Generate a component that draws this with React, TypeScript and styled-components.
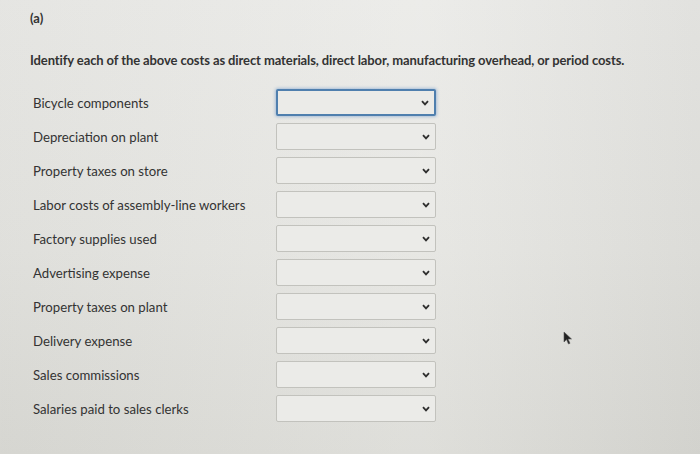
import React from "react";
import styled, { createGlobalStyle } from "styled-components";

const Global = createGlobalStyle`
  html, body { margin: 0; padding: 0; }
  body {
    width: 700px; height: 454px; overflow: hidden;
    font-family: Lato, "Open Sans", sans-serif;
    background: linear-gradient(180deg, #e9e9e6 0%, #e3e3df 55%, #d9d9d4 100%);
  }
`;

const Page = styled.div`
  position: relative;
  width: 700px;
  height: 454px;
  box-sizing: border-box;
  padding: 9px 0 0 30px;
  color: #333;
  background: linear-gradient(90deg, rgba(0,0,0,0.015) 0%, rgba(255,255,255,0.14) 60%, rgba(0,0,0,0.03) 100%);
`;

const Part = styled.div`
  font-size: 13px;
  font-weight: 700;
  line-height: 18px;
  color: #333;
`;

const Heading = styled.p`
  margin: 24px 0 0 0;
  font-size: 13px;
  font-weight: 700;
  line-height: 18px;
  color: #333;
  letter-spacing: -0.1px;
`;

const Grid = styled.div`
  display: grid;
  grid-template-columns: 243px 160px;
  grid-auto-rows: 27px;
  row-gap: 7px;
  margin-top: 20px;
  margin-left: 3px;
`;

const Label = styled.div`
  display: flex;
  align-items: center;
  font-size: 13.2px;
  color: #333;
`;

const SelectBox = styled.div<{ $focused?: boolean }>`
  box-sizing: border-box;
  height: 27px;
  display: flex;
  align-items: center;
  justify-content: flex-end;
  padding-right: 5px;
  background: #ebebe8;
  border: ${(p) => (p.$focused ? "2px solid #4f7fae" : "1px solid #c2c2bd")};
  border-radius: 2px;
  box-shadow: ${(p) => (p.$focused ? "0 0 3px 1px rgba(90,140,200,0.45)" : "none")};
`;

const Cursor = styled.svg`
  position: absolute;
  left: 563px;
  top: 331px;
`;

const Chevron = () => (
  <svg width="8" height="6" viewBox="0 0 8 6">
    <path d="M1 1.2 L4 4.4 L7 1.2" fill="none" stroke="#2e2e2e" strokeWidth="1.8" />
  </svg>
);

const items = [
  "Bicycle components",
  "Depreciation on plant",
  "Property taxes on store",
  "Labor costs of assembly-line workers",
  "Factory supplies used",
  "Advertising expense",
  "Property taxes on plant",
  "Delivery expense",
  "Sales commissions",
  "Salaries paid to sales clerks",
];

export default function App() {
  return (
    <>
      <Global />
      <Page>
        <Part>(a)</Part>
        <Heading>
          Identify each of the above costs as direct materials, direct labor, manufacturing overhead, or period costs.
        </Heading>
        <Grid>
          {items.map((t, i) => (
            <React.Fragment key={t}>
              <Label>{t}</Label>
              <SelectBox $focused={i === 0}>
                <Chevron />
              </SelectBox>
            </React.Fragment>
          ))}
        </Grid>
        <Cursor width="10" height="14" viewBox="0 0 10 14">
          <path d="M1 1 L1 11 L3.5 8.5 L5.5 13 L7 12.3 L5 8 L8.5 8 Z" fill="#222" stroke="#555" strokeWidth="0.6" />
        </Cursor>
      </Page>
    </>
  );
}
